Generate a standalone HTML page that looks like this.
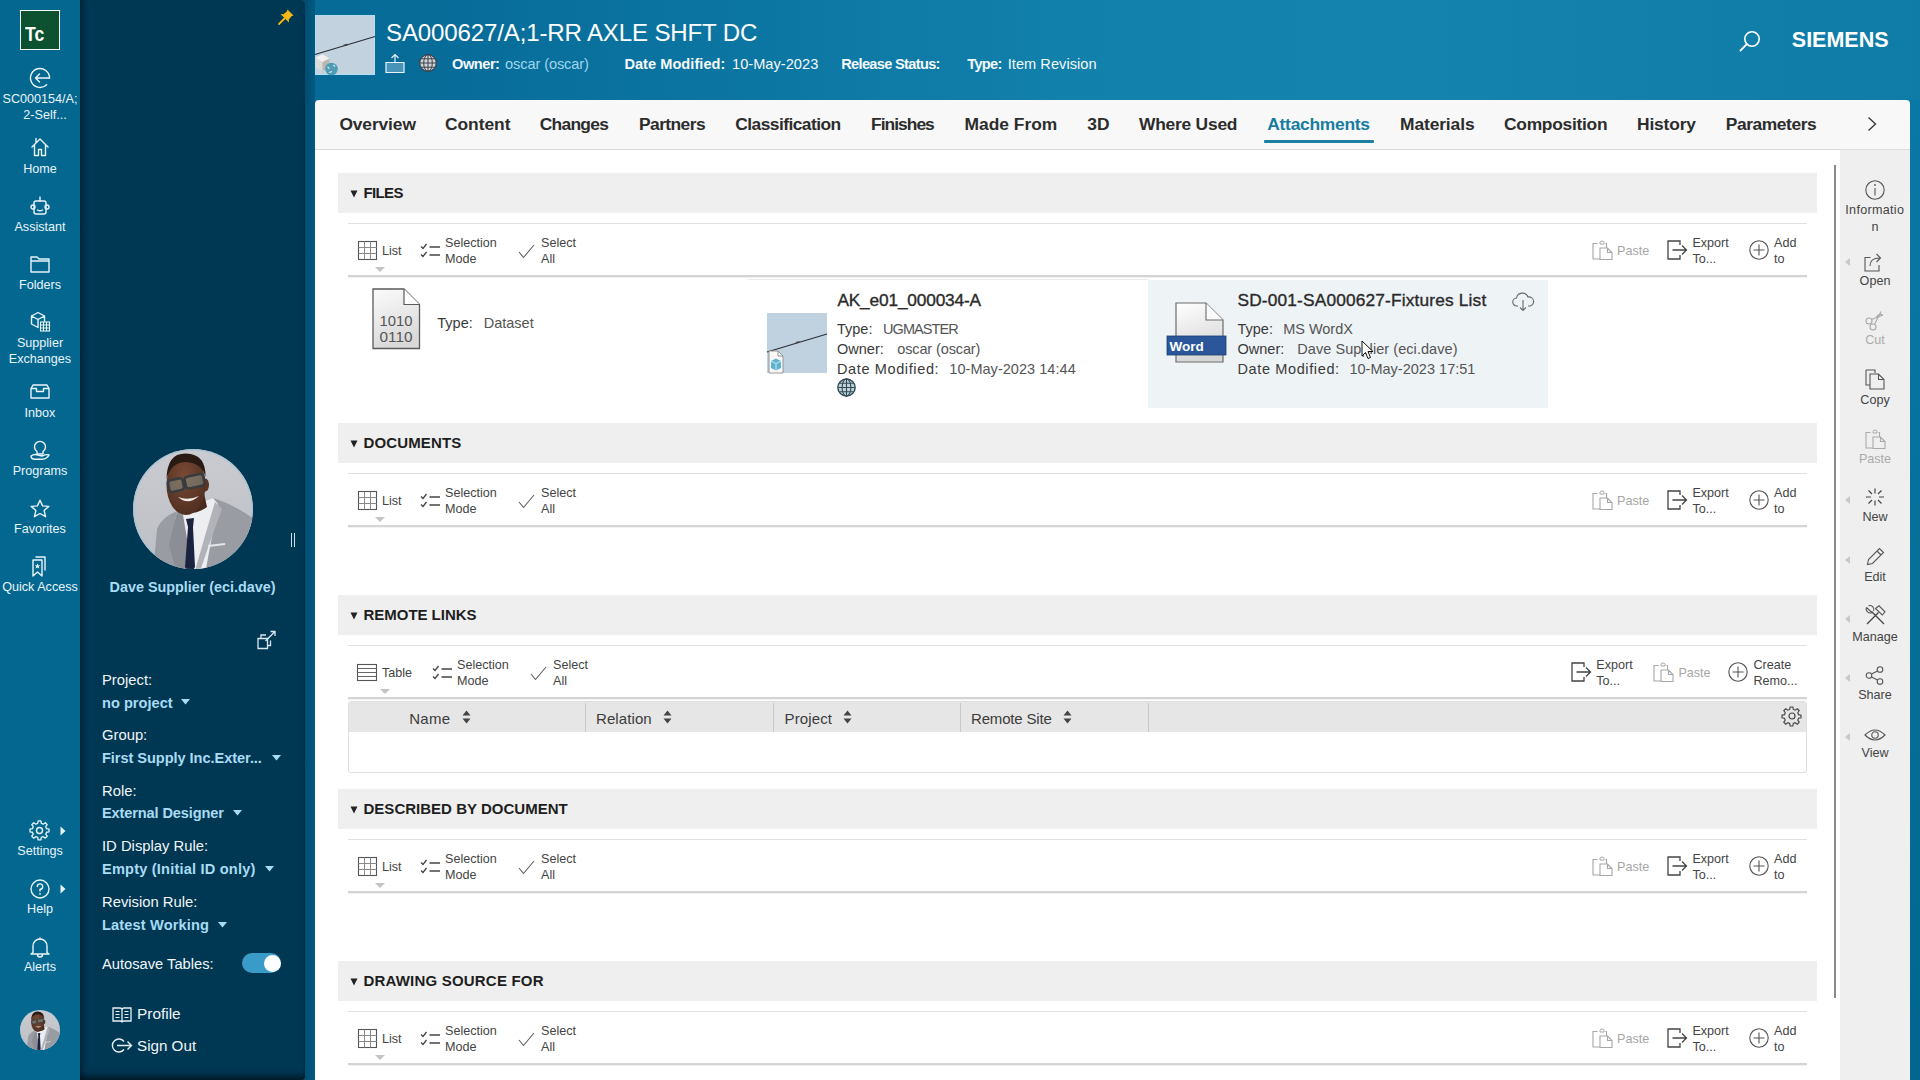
<!DOCTYPE html>
<html><head><meta charset="utf-8"><title>Teamcenter</title>
<style>
html,body{margin:0;padding:0;}
body{width:1920px;height:1080px;overflow:hidden;position:relative;background:#fff;font-family:"Liberation Sans",sans-serif;}
.t{position:absolute;white-space:nowrap;line-height:1;}
.r{position:absolute;}
svg.r{overflow:visible;}
</style></head><body>
<div class="r" style="left:0px;top:0px;width:1920px;height:1080px;background:linear-gradient(90deg,#04658f 0%,#086d9a 25%,#1180ab 55%,#1483ad 72%,#0f7ca8 100%);"></div>
<div class="r" style="left:1910px;top:100px;width:10px;height:980px;background:linear-gradient(180deg,#0a78a5,#02668f);"></div>
<div class="r" style="left:298px;top:0px;width:17px;height:1080px;background:linear-gradient(90deg,#024d72 40%,#03597f);"></div>
<div class="r" style="left:0px;top:0px;width:80px;height:1080px;background:#04678f;"></div>
<div class="r" style="left:80px;top:0px;width:225px;height:1080px;background:#003753;box-shadow:inset 7px 0 6px -5px rgba(0,0,0,0.4), inset 0 -7px 6px -3px rgba(0,0,0,0.55);border-radius:0 5px 4px 0;"></div>
<div class="r" style="left:315px;top:100px;width:1595px;height:50px;background:#f8f8f8;border-radius:4px 4px 0 0;border-bottom:1px solid #dcdcdc;box-sizing:border-box;"></div>
<div class="r" style="left:315px;top:150px;width:1525px;height:930px;background:#fff;"></div>
<div class="r" style="left:1840px;top:150px;width:70px;height:930px;background:#efefef;"></div>
<div class="r" style="left:20px;top:10px;width:40px;height:40px;background:#0c5230;border:1.5px solid #f4f8f6;box-sizing:border-box;"></div>
<div class="t" style="left:25.0px;top:23.9px;font-size:20.5px;font-weight:bold;color:#ffffff;transform:scaleX(0.86);transform-origin:0 0;">Tc</div>
<svg class="r" style="left:30px;top:68px;" width="20" height="20" viewBox="0 0 20 20" fill="none"><path d="M19.5 10 A9.5 9.5 0 1 0 16.7 16.7" stroke="#e8f5fb" stroke-width="1.4" stroke-linecap="round" stroke-linejoin="round"/><path d="M5.5 10 H19.5 M9.5 6 L5.5 10 L9.5 14" stroke="#e8f5fb" stroke-width="1.4" stroke-linecap="round" stroke-linejoin="round"/></svg>
<div class="t" style="left:-260.0px;width:600px;text-align:center;top:92.8px;font-size:12.6px;font-weight:normal;color:#e8f5fb;">SC000154/A;</div>
<div class="t" style="left:-255.0px;width:600px;text-align:center;top:108.8px;font-size:12.6px;font-weight:normal;color:#e8f5fb;">2-Self...</div>
<svg class="r" style="left:30px;top:137px;" width="20" height="20" viewBox="0 0 20 20" fill="none"><path d="M2 10 L10 2 L18 10 M4.5 8 V18.5 H8.5 V12.5 H11.5 V18.5 H15.5 V8 M6 5.5 V1.5" stroke="#e8f5fb" stroke-width="1.4" stroke-linecap="round" stroke-linejoin="round"/></svg>
<div class="t" style="left:-260.0px;width:600px;text-align:center;top:162.6px;font-size:12.6px;font-weight:normal;color:#e8f5fb;">Home</div>
<svg class="r" style="left:30px;top:196px;" width="20" height="20" viewBox="0 0 20 20" fill="none"><rect x="4" y="5" width="12" height="13" rx="2" stroke="#e8f5fb" stroke-width="1.4" stroke-linecap="round" stroke-linejoin="round"/><circle cx="3" cy="11" r="2" stroke="#e8f5fb" stroke-width="1.4" stroke-linecap="round" stroke-linejoin="round"/><circle cx="17" cy="11" r="2" stroke="#e8f5fb" stroke-width="1.4" stroke-linecap="round" stroke-linejoin="round"/><path d="M10 5 V1 M7.5 14 Q10 15.5 12.5 14" stroke="#e8f5fb" stroke-width="1.4" stroke-linecap="round" stroke-linejoin="round"/></svg>
<div class="t" style="left:-260.0px;width:600px;text-align:center;top:220.8px;font-size:12.6px;font-weight:normal;color:#e8f5fb;">Assistant</div>
<svg class="r" style="left:30px;top:255px;" width="20" height="18" viewBox="0 0 20 18" fill="none"><path d="M1 2 H7 L9 4 H19 V17 H1 Z M1 6 H19" stroke="#e8f5fb" stroke-width="1.4" stroke-linecap="round" stroke-linejoin="round"/></svg>
<div class="t" style="left:-260.0px;width:600px;text-align:center;top:278.6px;font-size:12.6px;font-weight:normal;color:#e8f5fb;">Folders</div>
<svg class="r" style="left:30px;top:311px;" width="21" height="21" viewBox="0 0 21 21" fill="none"><path d="M1.5 5 L8 1.5 L14.5 5 V10 M1.5 5 V13 L8 16.5 M1.5 5 L8 8.5 L14.5 5 M8 8.5 V16.5" stroke="#e8f5fb" stroke-width="1.4" stroke-linecap="round" stroke-linejoin="round"/><rect x="10.5" y="11" width="9" height="9" stroke="#e8f5fb" stroke-width="1.1"/><path d="M10.5 14 H19.5 M10.5 17 H19.5 M13.5 11 V20 M16.5 11 V20" stroke="#e8f5fb" stroke-width="1"/></svg>
<div class="t" style="left:-260.0px;width:600px;text-align:center;top:336.5px;font-size:12.6px;font-weight:normal;color:#e8f5fb;">Supplier</div>
<div class="t" style="left:-260.0px;width:600px;text-align:center;top:352.6px;font-size:12.6px;font-weight:normal;color:#e8f5fb;">Exchanges</div>
<svg class="r" style="left:30px;top:384px;" width="20" height="15" viewBox="0 0 20 15" fill="none"><path d="M3 1 H17 L19 4.5 V14 H1 V4.5 Z M1 4.5 H6.5 V7.5 H13.5 V4.5 H19" stroke="#e8f5fb" stroke-width="1.4" stroke-linecap="round" stroke-linejoin="round"/></svg>
<div class="t" style="left:-260.0px;width:600px;text-align:center;top:406.5px;font-size:12.6px;font-weight:normal;color:#e8f5fb;">Inbox</div>
<svg class="r" style="left:30px;top:440px;" width="20" height="20" viewBox="0 0 20 20" fill="none"><path d="M7 11.5 A5.5 5.5 0 1 1 13 11.5 V14 H7 Z" stroke="#e8f5fb" stroke-width="1.4" stroke-linecap="round" stroke-linejoin="round"/><path d="M1 16 Q4 13.5 8 15 L12 16 Q17 14 19 15 Q17 19 12 19.3 H4 Q1 19 1 16 Z" stroke="#e8f5fb" stroke-width="1.4" stroke-linecap="round" stroke-linejoin="round"/></svg>
<div class="t" style="left:-260.0px;width:600px;text-align:center;top:464.8px;font-size:12.6px;font-weight:normal;color:#e8f5fb;">Programs</div>
<svg class="r" style="left:30px;top:498.5px;" width="20" height="19" viewBox="0 0 20 19" fill="none"><path d="M10 1.2 L12.6 6.9 L18.8 7.4 L14.1 11.5 L15.6 17.7 L10 14.5 L4.4 17.7 L5.9 11.5 L1.2 7.4 L7.4 6.9 Z" stroke="#e8f5fb" stroke-width="1.4" stroke-linecap="round" stroke-linejoin="round"/></svg>
<div class="t" style="left:-260.0px;width:600px;text-align:center;top:522.6px;font-size:12.6px;font-weight:normal;color:#e8f5fb;">Favorites</div>
<svg class="r" style="left:32px;top:556px;" width="16" height="21" viewBox="0 0 16 21" fill="none"><path d="M4 1 H13 V14 M1 4 H10 V20 L5.5 16 L1 20 Z" stroke="#e8f5fb" stroke-width="1.4" stroke-linecap="round" stroke-linejoin="round"/><path d="M5.5 7.5 L6.3 9.3 L8.2 9.4 L6.8 10.6 L7.3 12.5 L5.5 11.4 L3.7 12.5 L4.2 10.6 L2.8 9.4 L4.7 9.3 Z" fill="#e8f5fb"/></svg>
<div class="t" style="left:-260.0px;width:600px;text-align:center;top:580.8px;font-size:12.6px;font-weight:normal;color:#e8f5fb;">Quick Access</div>
<svg class="r" style="left:30px;top:820px;" width="20" height="20" viewBox="0 0 20 20" fill="none"><path d="M8.6 1 H11.4 L11.9 3.6 L13.9 4.4 L16.1 2.9 L18.1 4.9 L16.6 7.1 L17.4 9.1 L20 9.6 V12.4 L17.4 12.9 L16.6 14.9 L18.1 17.1 L16.1 19.1 L13.9 17.6 L11.9 18.4 L11.4 21 H8.6 L8.1 18.4 L6.1 17.6 L3.9 19.1 L1.9 17.1 L3.4 14.9 L2.6 12.9 L0 12.4 V9.6 L2.6 9.1 L3.4 7.1 L1.9 4.9 L3.9 2.9 L6.1 4.4 L8.1 3.6 Z" stroke="#e8f5fb" stroke-width="1.4" stroke-linecap="round" stroke-linejoin="round" transform="scale(0.95)"/><circle cx="9.5" cy="10.5" r="3" stroke="#e8f5fb" stroke-width="1.4" stroke-linecap="round" stroke-linejoin="round"/></svg>
<svg class="r" style="left:60px;top:826px;" width="6" height="10" viewBox="0 0 6 10" fill="none"><path d="M0.5 0.5 L5.5 5 L0.5 9.5 Z" fill="#e8f5fb"/></svg>
<div class="t" style="left:-260.0px;width:600px;text-align:center;top:844.8px;font-size:12.6px;font-weight:normal;color:#e8f5fb;">Settings</div>
<svg class="r" style="left:30px;top:879px;" width="20" height="20" viewBox="0 0 20 20" fill="none"><circle cx="10" cy="10" r="9" stroke="#e8f5fb" stroke-width="1.4" stroke-linecap="round" stroke-linejoin="round"/><path d="M7.3 7.5 A2.7 2.7 0 1 1 10 10.3 V12" stroke="#e8f5fb" stroke-width="1.4" stroke-linecap="round" stroke-linejoin="round"/><circle cx="10" cy="14.8" r="0.9" fill="#e8f5fb"/></svg>
<svg class="r" style="left:60px;top:884px;" width="6" height="10" viewBox="0 0 6 10" fill="none"><path d="M0.5 0.5 L5.5 5 L0.5 9.5 Z" fill="#e8f5fb"/></svg>
<div class="t" style="left:-260.0px;width:600px;text-align:center;top:902.8px;font-size:12.6px;font-weight:normal;color:#e8f5fb;">Help</div>
<svg class="r" style="left:30px;top:937px;" width="20" height="20" viewBox="0 0 20 20" fill="none"><path d="M10 1 V2.5 M3 15.5 V9 A7 7 0 0 1 17 9 V15.5 L19 17 H1 Z M7.5 17.5 A2.5 2.5 0 0 0 12.5 17.5" stroke="#e8f5fb" stroke-width="1.4" stroke-linecap="round" stroke-linejoin="round"/></svg>
<div class="t" style="left:-260.0px;width:600px;text-align:center;top:960.8px;font-size:12.6px;font-weight:normal;color:#e8f5fb;">Alerts</div>
<svg class="r" style="left:20px;top:1010px" width="40" height="40" viewBox="0 0 120 120">
<defs><clipPath id="av1"><circle cx="60" cy="60" r="60"/></clipPath>
<linearGradient id="av1bg" x1="0" y1="0" x2="0" y2="1"><stop offset="0" stop-color="#c9cbd0"/><stop offset="1" stop-color="#bdbfc6"/></linearGradient>
<radialGradient id="av1f" cx="0.45" cy="0.35" r="0.7"><stop offset="0" stop-color="#7a4a35"/><stop offset="1" stop-color="#4e2d20"/></radialGradient></defs>
<g clip-path="url(#av1)">
<rect width="120" height="120" fill="url(#av1bg)"/>
<circle cx="60" cy="60" r="59.3" fill="none" stroke="#a9c3d2" stroke-width="1.4"/>
<path d="M20 125 L24 80 Q30 66 48 61 L60 56 L80 49 Q100 55 121 70 L122 125 Z" fill="#9a9ca3"/>
<path d="M44 63 L58 57 L80 49 L85 55 L72 125 L56 125 L42 72 Z" fill="#eceef2"/>
<path d="M44 63 L50 66 L60 125 L44 125 L36 96 Z" fill="#8c8e95"/>
<path d="M82 53 L89 60 L83 76 L66 125 L61 125 L74 80 Z" fill="#b1b3b9"/>
<path d="M53 70 L61 69 L60 78 L62 118 L57 126 L52 118 L55 78 Z" fill="#1b2240"/>
<path d="M75 97 L92 95" stroke="#e4e6ea" stroke-width="2"/>
<path d="M46 52 Q54 72 74 58 L71 44 L49 46 Z" fill="#4a2a1e"/>
<ellipse cx="72.5" cy="36" rx="3.5" ry="6.5" fill="#5a3424"/>
<ellipse cx="53" cy="36" rx="19.5" ry="30" fill="url(#av1f)"/>
<path d="M33.5 30 Q34 4 53 4.5 Q73 5 72.5 28 Q69 14 53 13 Q38 13 33.5 30 Z" fill="#2a1a14"/>
<g transform="rotate(-12 53 33)"><rect x="35" y="28" width="15" height="12" rx="3" fill="#8aa39c" fill-opacity="0.45" stroke="#3a3b3f" stroke-width="2.6"/><rect x="52" y="28" width="19" height="12" rx="3" fill="#8aa39c" fill-opacity="0.45" stroke="#3a3b3f" stroke-width="2.6"/></g>
<path d="M45 48 Q55 57 66 47 Q55 52 45 48 Z" fill="#f1ebe5"/>
</g></svg>
<svg class="r" style="left:277px;top:8px;" width="18" height="18" viewBox="0 0 18 18" fill="none"><path d="M10.5 1.5 L16.5 7.5 L14.5 8.2 L11.8 11.5 L12 14.5 L3.5 6 L6.5 6.2 L9.8 3.5 Z" fill="#f5b816"/><path d="M7.5 10.5 L2 16" stroke="#f5b816" stroke-width="1.8" stroke-linecap="round"/></svg>
<svg class="r" style="left:133px;top:449px" width="120" height="120" viewBox="0 0 120 120">
<defs><clipPath id="av2"><circle cx="60" cy="60" r="60"/></clipPath>
<linearGradient id="av2bg" x1="0" y1="0" x2="0" y2="1"><stop offset="0" stop-color="#c9cbd0"/><stop offset="1" stop-color="#bdbfc6"/></linearGradient>
<radialGradient id="av2f" cx="0.45" cy="0.35" r="0.7"><stop offset="0" stop-color="#7a4a35"/><stop offset="1" stop-color="#4e2d20"/></radialGradient></defs>
<g clip-path="url(#av2)">
<rect width="120" height="120" fill="url(#av2bg)"/>
<circle cx="60" cy="60" r="59.3" fill="none" stroke="#a9c3d2" stroke-width="1.4"/>
<path d="M20 125 L24 80 Q30 66 48 61 L60 56 L80 49 Q100 55 121 70 L122 125 Z" fill="#9a9ca3"/>
<path d="M44 63 L58 57 L80 49 L85 55 L72 125 L56 125 L42 72 Z" fill="#eceef2"/>
<path d="M44 63 L50 66 L60 125 L44 125 L36 96 Z" fill="#8c8e95"/>
<path d="M82 53 L89 60 L83 76 L66 125 L61 125 L74 80 Z" fill="#b1b3b9"/>
<path d="M53 70 L61 69 L60 78 L62 118 L57 126 L52 118 L55 78 Z" fill="#1b2240"/>
<path d="M75 97 L92 95" stroke="#e4e6ea" stroke-width="2"/>
<path d="M46 52 Q54 72 74 58 L71 44 L49 46 Z" fill="#4a2a1e"/>
<ellipse cx="72.5" cy="36" rx="3.5" ry="6.5" fill="#5a3424"/>
<ellipse cx="53" cy="36" rx="19.5" ry="30" fill="url(#av2f)"/>
<path d="M33.5 30 Q34 4 53 4.5 Q73 5 72.5 28 Q69 14 53 13 Q38 13 33.5 30 Z" fill="#2a1a14"/>
<g transform="rotate(-12 53 33)"><rect x="35" y="28" width="15" height="12" rx="3" fill="#8aa39c" fill-opacity="0.45" stroke="#3a3b3f" stroke-width="2.6"/><rect x="52" y="28" width="19" height="12" rx="3" fill="#8aa39c" fill-opacity="0.45" stroke="#3a3b3f" stroke-width="2.6"/></g>
<path d="M45 48 Q55 57 66 47 Q55 52 45 48 Z" fill="#f1ebe5"/>
</g></svg>
<div class="t" style="left:109.6px;top:580.3px;font-size:14.4px;font-weight:bold;color:#a8dcf3;letter-spacing:-0.020px;">Dave Supplier (eci.dave)</div>
<div class="r" style="left:291px;top:533px;width:1px;height:14px;background:#d0e0e8;"></div>
<div class="r" style="left:294px;top:533px;width:1px;height:14px;background:#d0e0e8;"></div>
<svg class="r" style="left:256px;top:630px;" width="21" height="21" viewBox="0 0 21 21" fill="none"><path d="M2 8.5 H11.5 V18.5 H2 Z" stroke="#d9e8ef" stroke-width="1.3" fill="none"/><path d="M5 8.5 V5 H10 M14.5 10.5 V15.5 H11.5" stroke="#d9e8ef" stroke-width="1.3" fill="none"/><path d="M9.5 11 L19 1.5 M14.5 1.5 H19 V6" stroke="#d9e8ef" stroke-width="1.3" fill="none"/></svg>
<div class="t" style="left:102.0px;top:672.6px;font-size:14.8px;font-weight:normal;color:#f2f6f8;">Project:</div>
<div class="t" style="left:102.0px;top:695.5px;font-size:14.6px;font-weight:bold;color:#a8dcf3;letter-spacing:0.014px;">no project</div>
<svg class="r" style="left:181px;top:699.4px;" width="9" height="6" viewBox="0 0 9 6" fill="none"><path d="M0 0 H9 L4.5 5.5 Z" fill="#a8dcf3"/></svg>
<div class="t" style="left:102.0px;top:728.0px;font-size:14.8px;font-weight:normal;color:#f2f6f8;">Group:</div>
<div class="t" style="left:102.0px;top:750.9px;font-size:14.6px;font-weight:bold;color:#a8dcf3;letter-spacing:-0.061px;">First Supply Inc.Exter...</div>
<svg class="r" style="left:271.5px;top:754.8px;" width="9" height="6" viewBox="0 0 9 6" fill="none"><path d="M0 0 H9 L4.5 5.5 Z" fill="#a8dcf3"/></svg>
<div class="t" style="left:102.0px;top:784.3px;font-size:14.8px;font-weight:normal;color:#f2f6f8;">Role:</div>
<div class="t" style="left:102.0px;top:806.1px;font-size:14.6px;font-weight:bold;color:#a8dcf3;letter-spacing:-0.134px;">External Designer</div>
<svg class="r" style="left:232.5px;top:810px;" width="9" height="6" viewBox="0 0 9 6" fill="none"><path d="M0 0 H9 L4.5 5.5 Z" fill="#a8dcf3"/></svg>
<div class="t" style="left:102.0px;top:839.0px;font-size:14.8px;font-weight:normal;color:#f2f6f8;">ID Display Rule:</div>
<div class="t" style="left:102.0px;top:862.3px;font-size:14.6px;font-weight:bold;color:#a8dcf3;letter-spacing:0.188px;">Empty (Initial ID only)</div>
<svg class="r" style="left:265px;top:866.2px;" width="9" height="6" viewBox="0 0 9 6" fill="none"><path d="M0 0 H9 L4.5 5.5 Z" fill="#a8dcf3"/></svg>
<div class="t" style="left:102.0px;top:895.4px;font-size:14.8px;font-weight:normal;color:#f2f6f8;">Revision Rule:</div>
<div class="t" style="left:102.0px;top:917.7px;font-size:14.6px;font-weight:bold;color:#a8dcf3;letter-spacing:0.139px;">Latest Working</div>
<svg class="r" style="left:217.5px;top:921.6px;" width="9" height="6" viewBox="0 0 9 6" fill="none"><path d="M0 0 H9 L4.5 5.5 Z" fill="#a8dcf3"/></svg>
<div class="t" style="left:102.0px;top:956.5px;font-size:14.7px;font-weight:normal;color:#f2f6f8;">Autosave Tables:</div>
<div class="r" style="left:242px;top:953px;width:39px;height:20px;background:#3a9bc9;border-radius:10px;"></div>
<div class="r" style="left:264px;top:954.5px;width:17px;height:17px;background:#fff;border-radius:50%;"></div>
<svg class="r" style="left:112px;top:1006px;" width="20" height="17" viewBox="0 0 20 17" fill="none"><path d="M1 2 H8 Q10 2 10 4 Q10 2 12 2 H19 V15 H12 Q10 15 10 16.5 Q10 15 8 15 H1 Z M10 4 V16" stroke="#e6f1f6" stroke-width="1.3" fill="none"/><path d="M3.5 5.5 H7.5 M3.5 8.5 H7.5 M3.5 11.5 H7.5 M12.5 5.5 H16.5 M12.5 8.5 H16.5 M12.5 11.5 H16.5" stroke="#e6f1f6" stroke-width="1.2"/></svg>
<div class="t" style="left:137.0px;top:1006.3px;font-size:15.4px;font-weight:normal;color:#f2f6f8;">Profile</div>
<svg class="r" style="left:111px;top:1038px;" width="22" height="15" viewBox="0 0 22 15" fill="none"><path d="M13 3.5 A6.5 6.5 0 1 0 13 11.5" stroke="#e6f1f6" stroke-width="1.4" fill="none"/><path d="M6 7.5 H20.5 M16.5 3.5 L20.5 7.5 L16.5 11.5" stroke="#e6f1f6" stroke-width="1.4" fill="none"/></svg>
<div class="t" style="left:137.0px;top:1038.4px;font-size:15.2px;font-weight:normal;color:#f2f6f8;">Sign Out</div>
<svg class="r" style="left:315px;top:15px" width="60" height="60" viewBox="0 0 60 60">
<rect x="0.5" y="0.5" width="59" height="59" fill="#c3d2df" stroke="#b4def2" stroke-width="1"/>
<path d="M0 39.5 L60 21.5" stroke="#2b3138" stroke-width="1.3"/>
<rect x="28.5" y="29.2" width="4" height="1.6" fill="#3c4147" transform="rotate(-17 30.5 30)"/>
<path d="M0.5 42.5 L7.5 39.5 L14.5 43.5 L14.5 52.5 L7.5 56 L0.5 52.5 Z" fill="#dcdad8"/><path d="M0.5 42.5 L7.5 39.5 L14.5 43.5 L7.5 47 Z" fill="#f2f1f0"/><path d="M7.5 47 L14.5 43.5 L14.5 52.5 L7.5 56 Z" fill="#b9b6b3"/>
<circle cx="16.5" cy="54" r="6.3" fill="#4f9cb4"/><path d="M12.5 52 L14.5 53.5 M18.5 50 L20 51.5 M14 57.5 L17 56.5" stroke="#d9eef5" stroke-width="1.3"/>
</svg>
<div class="t" style="left:386.0px;top:21.4px;font-size:24.1px;font-weight:normal;color:#ffffff;letter-spacing:-0.165px;">SA000627/A;1-RR AXLE SHFT DC</div>
<svg class="r" style="left:385px;top:53px;" width="20" height="21" viewBox="0 0 20 21" fill="none"><path d="M1 9.5 H19 V19.5 H1 Z" fill="#4a93b8" stroke="#e6f2f8" stroke-width="1.2"/><path d="M10 1.5 V9 M6.5 5 L10 1.5 L13.5 5" stroke="#e6f2f8" stroke-width="1.2" fill="none"/></svg>
<svg class="r" style="left:418.5px;top:53.5px;" width="18" height="18" viewBox="0 0 18 18" fill="none"><circle cx="9" cy="9" r="8.3" fill="#cdd6da" stroke="#3d3f45" stroke-width="1.2"/><path d="M1 9 H17 M2.5 4.8 H15.5 M2.5 13.2 H15.5 M9 1 V17" stroke="#3d3f45" stroke-width="1" fill="none"/><ellipse cx="9" cy="9" rx="4.3" ry="8.3" stroke="#3d3f45" stroke-width="1" fill="none"/></svg>
<div class="t" style="left:452.0px;top:57.4px;font-size:14.6px;font-weight:bold;color:#f4f8fa;letter-spacing:-0.459px;">Owner:</div>
<div class="t" style="left:505.0px;top:57.4px;font-size:14.6px;font-weight:normal;color:#9fd6ef;letter-spacing:-0.099px;">oscar (oscar)</div>
<div class="t" style="left:624.4px;top:57.4px;font-size:14.6px;font-weight:bold;color:#f4f8fa;letter-spacing:0.032px;">Date Modified:</div>
<div class="t" style="left:732.0px;top:57.4px;font-size:14.6px;font-weight:normal;color:#f4f8fa;letter-spacing:0.028px;">10-May-2023</div>
<div class="t" style="left:841.2px;top:57.4px;font-size:14.6px;font-weight:bold;color:#f4f8fa;letter-spacing:-0.674px;">Release Status:</div>
<div class="t" style="left:967.3px;top:57.4px;font-size:14.6px;font-weight:bold;color:#f4f8fa;letter-spacing:-0.714px;">Type:</div>
<div class="t" style="left:1007.7px;top:57.4px;font-size:14.6px;font-weight:normal;color:#f4f8fa;letter-spacing:0.046px;">Item Revision</div>
<svg class="r" style="left:1739px;top:30px;" width="22" height="22" viewBox="0 0 22 22" fill="none"><circle cx="13" cy="9" r="7.2" stroke="#ffffff" stroke-width="1.6" fill="none"/><path d="M7.8 14.2 L1.5 20.5" stroke="#ffffff" stroke-width="1.8" stroke-linecap="round"/></svg>
<div class="t" style="left:1791.8px;top:29.9px;font-size:21.5px;font-weight:bold;color:#ffffff;letter-spacing:0px;">SIEMENS</div>
<div class="t" style="left:339.4px;top:115.8px;font-size:17.4px;font-weight:bold;color:#2c2c2c;letter-spacing:-0.116px;">Overview</div>
<div class="t" style="left:445.0px;top:115.8px;font-size:17.4px;font-weight:bold;color:#2c2c2c;letter-spacing:-0.037px;">Content</div>
<div class="t" style="left:539.7px;top:115.8px;font-size:17.4px;font-weight:bold;color:#2c2c2c;letter-spacing:-0.713px;">Changes</div>
<div class="t" style="left:639.0px;top:115.8px;font-size:17.4px;font-weight:bold;color:#2c2c2c;letter-spacing:-0.573px;">Partners</div>
<div class="t" style="left:735.3px;top:115.8px;font-size:17.4px;font-weight:bold;color:#2c2c2c;letter-spacing:-0.557px;">Classification</div>
<div class="t" style="left:871.0px;top:115.8px;font-size:17.4px;font-weight:bold;color:#2c2c2c;letter-spacing:-0.970px;">Finishes</div>
<div class="t" style="left:964.6px;top:115.8px;font-size:17.4px;font-weight:bold;color:#2c2c2c;letter-spacing:-0.014px;">Made From</div>
<div class="t" style="left:1087.3px;top:115.8px;font-size:17.4px;font-weight:bold;color:#2c2c2c;letter-spacing:-0.037px;">3D</div>
<div class="t" style="left:1139.0px;top:115.8px;font-size:17.4px;font-weight:bold;color:#2c2c2c;letter-spacing:-0.228px;">Where Used</div>
<div class="t" style="left:1267.3px;top:115.8px;font-size:17.4px;font-weight:bold;color:#177da0;letter-spacing:-0.269px;">Attachments</div>
<div class="t" style="left:1400.0px;top:115.8px;font-size:17.4px;font-weight:bold;color:#2c2c2c;letter-spacing:-0.104px;">Materials</div>
<div class="t" style="left:1504.0px;top:115.8px;font-size:17.4px;font-weight:bold;color:#2c2c2c;letter-spacing:-0.271px;">Composition</div>
<div class="t" style="left:1637.0px;top:115.8px;font-size:17.4px;font-weight:bold;color:#2c2c2c;letter-spacing:-0.157px;">History</div>
<div class="t" style="left:1725.8px;top:115.8px;font-size:17.4px;font-weight:bold;color:#2c2c2c;letter-spacing:-0.433px;">Parameters</div>
<div class="r" style="left:1264px;top:140px;width:110px;height:2.5px;background:#1b7fa1;border-radius:1px;"></div>
<svg class="r" style="left:1867px;top:116px;" width="10" height="16" viewBox="0 0 10 16" fill="none"><path d="M1.5 1.5 L8.5 8 L1.5 14.5" stroke="#3a3a3a" stroke-width="1.4" fill="none"/></svg>
<div class="r" style="left:338px;top:173px;width:1479px;height:40px;background:#efefef;"></div>
<svg class="r" style="left:350px;top:190px;" width="8" height="8" viewBox="0 0 8 8" fill="none"><path d="M0.5 0.5 H7.5 L4 7.5 Z" fill="#222"/></svg>
<div class="t" style="left:363.5px;top:185.1px;font-size:15px;font-weight:bold;color:#1e1e1e;letter-spacing:-0.627px;">FILES</div>
<div class="r" style="left:348px;top:223px;width:1459px;height:1px;background:#e1e1e1;"></div>
<div class="r" style="left:348px;top:275px;width:1459px;height:2px;background:#d4d4d4;box-shadow:0 1px 1px rgba(0,0,0,0.06);"></div>
<svg class="r" style="left:357.5px;top:240.5px;" width="19" height="19" viewBox="0 0 19 19" fill="none"><rect x="0.5" y="0.5" width="18" height="18" stroke="#555" stroke-width="1.1" fill="none"/><path d="M6.5 0.5 V18.5 M12.5 0.5 V18.5 M0.5 6.5 H18.5 M0.5 12.5 H18.5" stroke="#8a8a8a" stroke-width="1"/></svg>
<div class="t" style="left:382.0px;top:244.8px;font-size:12.6px;font-weight:normal;color:#444444;">List</div>
<svg class="r" style="left:375px;top:267px;" width="10" height="5" viewBox="0 0 10 5" fill="none"><path d="M0 0 H10 L5 5 Z" fill="#c4c4c4"/></svg>
<svg class="r" style="left:420px;top:243px;" width="21" height="17" viewBox="0 0 21 17" fill="none"><path d="M1 3.5 L3 5.5 L6.5 1 M1 11.5 L3 13.5 L6.5 9" stroke="#444" stroke-width="1.3" fill="none"/><path d="M9.5 4 H20 M9.5 12 H20" stroke="#444" stroke-width="1.3"/></svg>
<div class="t" style="left:445.0px;top:236.8px;font-size:12.6px;font-weight:normal;color:#444444;">Selection</div>
<div class="t" style="left:445.0px;top:252.8px;font-size:12.6px;font-weight:normal;color:#444444;">Mode</div>
<svg class="r" style="left:518px;top:244px;" width="17" height="15" viewBox="0 0 17 15" fill="none"><path d="M1 8 L5.5 13.5 L16 1" stroke="#5a5a5a" stroke-width="1.05" fill="none"/></svg>
<div class="t" style="left:541.0px;top:236.8px;font-size:12.6px;font-weight:normal;color:#444444;">Select</div>
<div class="t" style="left:541.0px;top:252.8px;font-size:12.6px;font-weight:normal;color:#444444;">All</div>
<svg class="r" style="left:1591.5px;top:240px;" width="21" height="20" viewBox="0 0 21 20" fill="none"><path d="M8 4 H12 V2.5 Q12 1 10 1 Q8 1 8 2.5 Z" stroke="#a6a6a6" stroke-width="1" fill="none"/><path d="M13.5 3.5 H14.5 V8 M5.5 3.5 H1 V19 H8" stroke="#a6a6a6" stroke-width="1.1" fill="none"/><path d="M8 8 H15.5 L20 12.5 V19.5 H8 Z M15.5 8 V12.5 H20" stroke="#a6a6a6" stroke-width="1.1" fill="none"/></svg>
<div class="t" style="left:1617.0px;top:245.3px;font-size:12.6px;font-weight:normal;color:#a6a6a6;">Paste</div>
<svg class="r" style="left:1666.5px;top:240px;" width="21" height="20" viewBox="0 0 21 20" fill="none"><path d="M13 5 V1 H1 V19 H13 V15" stroke="#444" stroke-width="1.3" fill="none"/><path d="M5.5 10 H19.5 M15 5.5 L19.5 10 L15 14.5" stroke="#444" stroke-width="1.3" fill="none"/></svg>
<div class="t" style="left:1692.4px;top:236.8px;font-size:12.6px;font-weight:normal;color:#444444;">Export</div>
<div class="t" style="left:1692.4px;top:252.8px;font-size:12.6px;font-weight:normal;color:#444444;">To...</div>
<svg class="r" style="left:1748.5px;top:240px;" width="20" height="20" viewBox="0 0 20 20" fill="none"><circle cx="10" cy="10" r="9.2" stroke="#555" stroke-width="1.1" fill="none"/><path d="M10 4.5 V15.5 M4.5 10 H15.5" stroke="#555" stroke-width="1.1"/></svg>
<div class="t" style="left:1774.0px;top:236.8px;font-size:12.6px;font-weight:normal;color:#444444;">Add</div>
<div class="t" style="left:1774.0px;top:252.8px;font-size:12.6px;font-weight:normal;color:#444444;">to</div>
<svg class="r" style="left:372px;top:288px" width="49" height="62" viewBox="0 0 49 62">
<defs><linearGradient id="dg" x1="0" y1="0" x2="0.3" y2="1"><stop offset="0" stop-color="#fbfbfb"/><stop offset="1" stop-color="#d9d9d9"/></linearGradient></defs>
<path d="M1 1 H32 L47.5 16.5 V60.5 H1 Z" fill="url(#dg)" stroke="#5a5a5a" stroke-width="1.3"/>
<path d="M32 1 V16.5 H47.5" fill="#fff" stroke="#5a5a5a" stroke-width="1.2"/>
<text x="24" y="38" text-anchor="middle" font-family="Liberation Sans" font-size="15" fill="#555" textLength="33" lengthAdjust="spacingAndGlyphs">1010</text>
<text x="24" y="54" text-anchor="middle" font-family="Liberation Sans" font-size="15" fill="#555" textLength="33" lengthAdjust="spacingAndGlyphs">0110</text>
</svg>
<div class="t" style="left:437.3px;top:315.7px;font-size:14.5px;font-weight:normal;color:#3a3a3a;">Type:</div>
<div class="t" style="left:483.7px;top:315.7px;font-size:14.5px;font-weight:normal;color:#555555;letter-spacing:0.006px;">Dataset</div>
<div class="r" style="left:748px;top:279px;width:400px;height:1px;background:#ececec;"></div>
<svg class="r" style="left:767px;top:313px" width="60" height="61" viewBox="0 0 60 61">
<rect width="60" height="60" fill="#c0d1e0"/>
<path d="M0 39 L60 21" stroke="#2b3138" stroke-width="1.3"/>
<rect x="29" y="28.5" width="4" height="1.5" fill="#44494f" transform="rotate(-16 31 30)"/>
<path d="M2 38 H11 L16 43 V60 H2 Z" fill="#f7f7f7" stroke="#8d8d8d" stroke-width="0.9"/>
<path d="M11 38 V43 H16" fill="none" stroke="#8d8d8d" stroke-width="0.9"/>
<path d="M4 48 L9 45.5 L14 48 V55 L9 57.5 L4 55 Z" fill="#5eb2cf"/><path d="M4 48 L9 50.5 L14 48 M9 50.5 V57.5" stroke="#e6f5fa" stroke-width="0.8" fill="none"/>
</svg>
<div class="t" style="left:837.4px;top:292.4px;font-size:17.3px;font-weight:normal;color:#2a2a2a;-webkit-text-stroke:0.35px #2a2a2a;letter-spacing:-0.166px;">AK_e01_000034-A</div>
<div class="t" style="left:837.0px;top:322.4px;font-size:14.5px;font-weight:normal;color:#3a3a3a;">Type:</div>
<div class="t" style="left:883.0px;top:322.4px;font-size:14.5px;font-weight:normal;color:#555555;letter-spacing:-0.924px;">UGMASTER</div>
<div class="t" style="left:837.0px;top:342.4px;font-size:14.5px;font-weight:normal;color:#3a3a3a;">Owner:</div>
<div class="t" style="left:897.2px;top:342.4px;font-size:14.5px;font-weight:normal;color:#555555;letter-spacing:-0.117px;">oscar (oscar)</div>
<div class="t" style="left:837.0px;top:362.4px;font-size:14.5px;font-weight:normal;color:#3a3a3a;letter-spacing:0.623px;">Date Modified:</div>
<div class="t" style="left:949.3px;top:362.4px;font-size:14.5px;font-weight:normal;color:#555555;letter-spacing:0.041px;">10-May-2023 14:44</div>
<svg class="r" style="left:837px;top:378px;" width="19" height="19" viewBox="0 0 19 19" fill="none"><circle cx="9.5" cy="9.5" r="8.6" fill="#c3d3d9" stroke="#334b56" stroke-width="1.5"/><path d="M1.5 9.5 H17.5 M2.6 5.3 H16.4 M2.6 13.7 H16.4 M9.5 1 V18" stroke="#334b56" stroke-width="1.1" fill="none"/><ellipse cx="9.5" cy="9.5" rx="4.4" ry="8.6" stroke="#334b56" stroke-width="1.1" fill="none"/></svg>
<div class="r" style="left:1148px;top:279.5px;width:400px;height:128px;background:#eef3f6;"></div>
<svg class="r" style="left:1166px;top:302px" width="62" height="62" viewBox="0 0 62 62">
<defs><linearGradient id="wg" x1="0" y1="0" x2="0.3" y2="1"><stop offset="0" stop-color="#ffffff"/><stop offset="1" stop-color="#d6d6d6"/></linearGradient></defs>
<path d="M10 1 H40 L57 18 V60 H10 Z" fill="url(#wg)" stroke="#6b6b6b" stroke-width="1.2"/>
<path d="M40 1 V18 H57" fill="#fafafa" stroke="#6b6b6b" stroke-width="1.1"/>
<rect x="1" y="34" width="59" height="19" fill="#2b579a" stroke="#1d3f72" stroke-width="0.8"/>
<text x="3.5" y="48.5" font-family="Liberation Sans" font-size="13.5" font-weight="bold" fill="#fff">Word</text>
</svg>
<div class="t" style="left:1237.5px;top:292.4px;font-size:17.3px;font-weight:normal;color:#2a2a2a;-webkit-text-stroke:0.35px #2a2a2a;letter-spacing:0.170px;">SD-001-SA000627-Fixtures List</div>
<div class="t" style="left:1237.5px;top:322.4px;font-size:14.5px;font-weight:normal;color:#3a3a3a;">Type:</div>
<div class="t" style="left:1283.2px;top:322.4px;font-size:14.5px;font-weight:normal;color:#555555;letter-spacing:-0.019px;">MS WordX</div>
<div class="t" style="left:1237.5px;top:342.4px;font-size:14.5px;font-weight:normal;color:#3a3a3a;">Owner:</div>
<div class="t" style="left:1297.3px;top:342.4px;font-size:14.5px;font-weight:normal;color:#555555;letter-spacing:0.062px;">Dave Supplier (eci.dave)</div>
<div class="t" style="left:1237.5px;top:362.4px;font-size:14.5px;font-weight:normal;color:#3a3a3a;letter-spacing:0.623px;">Date Modified:</div>
<div class="t" style="left:1349.4px;top:362.4px;font-size:14.5px;font-weight:normal;color:#555555;letter-spacing:0.016px;">10-May-2023 17:51</div>
<svg class="r" style="left:1512px;top:292px;" width="23" height="20" viewBox="0 0 23 20" fill="none"><path d="M6 14 H5 A4 4 0 0 1 4.5 6 A6 6 0 0 1 16 5 A4.5 4.5 0 0 1 18 14 H16" stroke="#666" stroke-width="1.1" fill="none"/><path d="M11 8 V18.5 M8 15.5 L11 18.5 L14 15.5" stroke="#666" stroke-width="1.1" fill="none"/></svg>
<svg class="r" style="left:1361px;top:340px;" width="13" height="20" viewBox="0 0 13 20" fill="none"><path d="M1 1 V16 L4.5 12.5 L7 18.5 L9.5 17.5 L7 11.5 H12 Z" fill="#fff" stroke="#111" stroke-width="1"/></svg>
<div class="r" style="left:338px;top:423px;width:1479px;height:40px;background:#efefef;"></div>
<svg class="r" style="left:350px;top:440px;" width="8" height="8" viewBox="0 0 8 8" fill="none"><path d="M0.5 0.5 H7.5 L4 7.5 Z" fill="#222"/></svg>
<div class="t" style="left:363.5px;top:435.1px;font-size:15px;font-weight:bold;color:#1e1e1e;letter-spacing:0.130px;">DOCUMENTS</div>
<div class="r" style="left:348px;top:473px;width:1459px;height:1px;background:#e1e1e1;"></div>
<div class="r" style="left:348px;top:525px;width:1459px;height:2px;background:#d4d4d4;box-shadow:0 1px 1px rgba(0,0,0,0.06);"></div>
<svg class="r" style="left:357.5px;top:490.5px;" width="19" height="19" viewBox="0 0 19 19" fill="none"><rect x="0.5" y="0.5" width="18" height="18" stroke="#555" stroke-width="1.1" fill="none"/><path d="M6.5 0.5 V18.5 M12.5 0.5 V18.5 M0.5 6.5 H18.5 M0.5 12.5 H18.5" stroke="#8a8a8a" stroke-width="1"/></svg>
<div class="t" style="left:382.0px;top:494.8px;font-size:12.6px;font-weight:normal;color:#444444;">List</div>
<svg class="r" style="left:375px;top:517px;" width="10" height="5" viewBox="0 0 10 5" fill="none"><path d="M0 0 H10 L5 5 Z" fill="#c4c4c4"/></svg>
<svg class="r" style="left:420px;top:493px;" width="21" height="17" viewBox="0 0 21 17" fill="none"><path d="M1 3.5 L3 5.5 L6.5 1 M1 11.5 L3 13.5 L6.5 9" stroke="#444" stroke-width="1.3" fill="none"/><path d="M9.5 4 H20 M9.5 12 H20" stroke="#444" stroke-width="1.3"/></svg>
<div class="t" style="left:445.0px;top:486.8px;font-size:12.6px;font-weight:normal;color:#444444;">Selection</div>
<div class="t" style="left:445.0px;top:502.8px;font-size:12.6px;font-weight:normal;color:#444444;">Mode</div>
<svg class="r" style="left:518px;top:494px;" width="17" height="15" viewBox="0 0 17 15" fill="none"><path d="M1 8 L5.5 13.5 L16 1" stroke="#5a5a5a" stroke-width="1.05" fill="none"/></svg>
<div class="t" style="left:541.0px;top:486.8px;font-size:12.6px;font-weight:normal;color:#444444;">Select</div>
<div class="t" style="left:541.0px;top:502.8px;font-size:12.6px;font-weight:normal;color:#444444;">All</div>
<svg class="r" style="left:1591.5px;top:490px;" width="21" height="20" viewBox="0 0 21 20" fill="none"><path d="M8 4 H12 V2.5 Q12 1 10 1 Q8 1 8 2.5 Z" stroke="#a6a6a6" stroke-width="1" fill="none"/><path d="M13.5 3.5 H14.5 V8 M5.5 3.5 H1 V19 H8" stroke="#a6a6a6" stroke-width="1.1" fill="none"/><path d="M8 8 H15.5 L20 12.5 V19.5 H8 Z M15.5 8 V12.5 H20" stroke="#a6a6a6" stroke-width="1.1" fill="none"/></svg>
<div class="t" style="left:1617.0px;top:495.3px;font-size:12.6px;font-weight:normal;color:#a6a6a6;">Paste</div>
<svg class="r" style="left:1666.5px;top:490px;" width="21" height="20" viewBox="0 0 21 20" fill="none"><path d="M13 5 V1 H1 V19 H13 V15" stroke="#444" stroke-width="1.3" fill="none"/><path d="M5.5 10 H19.5 M15 5.5 L19.5 10 L15 14.5" stroke="#444" stroke-width="1.3" fill="none"/></svg>
<div class="t" style="left:1692.4px;top:486.8px;font-size:12.6px;font-weight:normal;color:#444444;">Export</div>
<div class="t" style="left:1692.4px;top:502.8px;font-size:12.6px;font-weight:normal;color:#444444;">To...</div>
<svg class="r" style="left:1748.5px;top:490px;" width="20" height="20" viewBox="0 0 20 20" fill="none"><circle cx="10" cy="10" r="9.2" stroke="#555" stroke-width="1.1" fill="none"/><path d="M10 4.5 V15.5 M4.5 10 H15.5" stroke="#555" stroke-width="1.1"/></svg>
<div class="t" style="left:1774.0px;top:486.8px;font-size:12.6px;font-weight:normal;color:#444444;">Add</div>
<div class="t" style="left:1774.0px;top:502.8px;font-size:12.6px;font-weight:normal;color:#444444;">to</div>
<div class="r" style="left:338px;top:595px;width:1479px;height:40px;background:#efefef;"></div>
<svg class="r" style="left:350px;top:612px;" width="8" height="8" viewBox="0 0 8 8" fill="none"><path d="M0.5 0.5 H7.5 L4 7.5 Z" fill="#222"/></svg>
<div class="t" style="left:363.5px;top:607.1px;font-size:15px;font-weight:bold;color:#1e1e1e;letter-spacing:-0.031px;">REMOTE LINKS</div>
<div class="r" style="left:348px;top:645px;width:1459px;height:1px;background:#e1e1e1;"></div>
<div class="r" style="left:348px;top:697px;width:1459px;height:2px;background:#d4d4d4;box-shadow:0 1px 1px rgba(0,0,0,0.06);"></div>
<svg class="r" style="left:357px;top:663.5px;" width="20" height="17" viewBox="0 0 20 17" fill="none"><rect x="0.5" y="0.5" width="19" height="16" stroke="#555" stroke-width="1.1" fill="none"/><path d="M0.5 4.5 H19.5 M0.5 8.5 H19.5 M0.5 12.5 H19.5" stroke="#666" stroke-width="1"/></svg>
<div class="t" style="left:382.0px;top:667.3px;font-size:12.6px;font-weight:normal;color:#444444;">Table</div>
<svg class="r" style="left:380px;top:689px;" width="10" height="5" viewBox="0 0 10 5" fill="none"><path d="M0 0 H10 L5 5 Z" fill="#c4c4c4"/></svg>
<svg class="r" style="left:432px;top:665px;" width="21" height="17" viewBox="0 0 21 17" fill="none"><path d="M1 3.5 L3 5.5 L6.5 1 M1 11.5 L3 13.5 L6.5 9" stroke="#444" stroke-width="1.3" fill="none"/><path d="M9.5 4 H20 M9.5 12 H20" stroke="#444" stroke-width="1.3"/></svg>
<div class="t" style="left:457.0px;top:658.8px;font-size:12.6px;font-weight:normal;color:#444444;">Selection</div>
<div class="t" style="left:457.0px;top:674.8px;font-size:12.6px;font-weight:normal;color:#444444;">Mode</div>
<svg class="r" style="left:530px;top:666px;" width="17" height="15" viewBox="0 0 17 15" fill="none"><path d="M1 8 L5.5 13.5 L16 1" stroke="#5a5a5a" stroke-width="1.05" fill="none"/></svg>
<div class="t" style="left:553.0px;top:658.8px;font-size:12.6px;font-weight:normal;color:#444444;">Select</div>
<div class="t" style="left:553.0px;top:674.8px;font-size:12.6px;font-weight:normal;color:#444444;">All</div>
<svg class="r" style="left:1570.5px;top:662px;" width="21" height="20" viewBox="0 0 21 20" fill="none"><path d="M13 5 V1 H1 V19 H13 V15" stroke="#444" stroke-width="1.3" fill="none"/><path d="M5.5 10 H19.5 M15 5.5 L19.5 10 L15 14.5" stroke="#444" stroke-width="1.3" fill="none"/></svg>
<div class="t" style="left:1596.3px;top:658.8px;font-size:12.6px;font-weight:normal;color:#444444;">Export</div>
<div class="t" style="left:1596.3px;top:674.8px;font-size:12.6px;font-weight:normal;color:#444444;">To...</div>
<svg class="r" style="left:1652.5px;top:662px;" width="21" height="20" viewBox="0 0 21 20" fill="none"><path d="M8 4 H12 V2.5 Q12 1 10 1 Q8 1 8 2.5 Z" stroke="#a6a6a6" stroke-width="1" fill="none"/><path d="M13.5 3.5 H14.5 V8 M5.5 3.5 H1 V19 H8" stroke="#a6a6a6" stroke-width="1.1" fill="none"/><path d="M8 8 H15.5 L20 12.5 V19.5 H8 Z M15.5 8 V12.5 H20" stroke="#a6a6a6" stroke-width="1.1" fill="none"/></svg>
<div class="t" style="left:1678.4px;top:667.3px;font-size:12.6px;font-weight:normal;color:#a6a6a6;">Paste</div>
<svg class="r" style="left:1727.5px;top:662px;" width="20" height="20" viewBox="0 0 20 20" fill="none"><circle cx="10" cy="10" r="9.2" stroke="#555" stroke-width="1.1" fill="none"/><path d="M10 4.5 V15.5 M4.5 10 H15.5" stroke="#555" stroke-width="1.1"/></svg>
<div class="t" style="left:1753.5px;top:658.8px;font-size:12.6px;font-weight:normal;color:#444444;">Create</div>
<div class="t" style="left:1753.5px;top:674.8px;font-size:12.6px;font-weight:normal;color:#444444;">Remo...</div>
<div class="r" style="left:348px;top:701px;width:1459px;height:72px;border:1px solid #dedede;border-radius:3px;box-sizing:border-box;background:#fff;"></div>
<div class="r" style="left:349px;top:702px;width:1457px;height:30px;background:#e6e6e6;border-radius:2px 2px 0 0;"></div>
<div class="r" style="left:585px;top:703px;width:1px;height:29px;background:#c9c9c9;"></div>
<div class="r" style="left:773px;top:703px;width:1px;height:29px;background:#c9c9c9;"></div>
<div class="r" style="left:960px;top:703px;width:1px;height:29px;background:#c9c9c9;"></div>
<div class="r" style="left:1148px;top:703px;width:1px;height:29px;background:#c9c9c9;"></div>
<div class="t" style="left:409.3px;top:710.8px;font-size:15px;font-weight:normal;color:#3c3c3c;letter-spacing:0.227px;">Name</div>
<svg class="r" style="left:461.5px;top:710px;" width="9" height="14" viewBox="0 0 9 14" fill="none"><path d="M0.5 5.5 L4.5 0.5 L8.5 5.5 Z M0.5 8.5 L4.5 13.5 L8.5 8.5 Z" fill="#444"/></svg>
<div class="t" style="left:596.0px;top:710.8px;font-size:15px;font-weight:normal;color:#3c3c3c;letter-spacing:0.095px;">Relation</div>
<svg class="r" style="left:663px;top:710px;" width="9" height="14" viewBox="0 0 9 14" fill="none"><path d="M0.5 5.5 L4.5 0.5 L8.5 5.5 Z M0.5 8.5 L4.5 13.5 L8.5 8.5 Z" fill="#444"/></svg>
<div class="t" style="left:784.5px;top:710.8px;font-size:15px;font-weight:normal;color:#3c3c3c;letter-spacing:0.137px;">Project</div>
<svg class="r" style="left:843.4px;top:710px;" width="9" height="14" viewBox="0 0 9 14" fill="none"><path d="M0.5 5.5 L4.5 0.5 L8.5 5.5 Z M0.5 8.5 L4.5 13.5 L8.5 8.5 Z" fill="#444"/></svg>
<div class="t" style="left:971.0px;top:710.8px;font-size:15px;font-weight:normal;color:#3c3c3c;letter-spacing:-0.173px;">Remote Site</div>
<svg class="r" style="left:1063px;top:710px;" width="9" height="14" viewBox="0 0 9 14" fill="none"><path d="M0.5 5.5 L4.5 0.5 L8.5 5.5 Z M0.5 8.5 L4.5 13.5 L8.5 8.5 Z" fill="#444"/></svg>
<svg class="r" style="left:1782px;top:706px;" width="21" height="21" viewBox="0 0 21 21" fill="none"><path d="M8.6 1 H11.4 L11.9 3.6 L13.9 4.4 L16.1 2.9 L18.1 4.9 L16.6 7.1 L17.4 9.1 L20 9.6 V12.4 L17.4 12.9 L16.6 14.9 L18.1 17.1 L16.1 19.1 L13.9 17.6 L11.9 18.4 L11.4 21 H8.6 L8.1 18.4 L6.1 17.6 L3.9 19.1 L1.9 17.1 L3.4 14.9 L2.6 12.9 L0 12.4 V9.6 L2.6 9.1 L3.4 7.1 L1.9 4.9 L3.9 2.9 L6.1 4.4 L8.1 3.6 Z" stroke="#444" stroke-width="1.2" fill="none" transform="scale(0.95)"/><circle cx="10" cy="10" r="3" stroke="#444" stroke-width="1.2" fill="none"/></svg>
<div class="r" style="left:338px;top:789px;width:1479px;height:40px;background:#efefef;"></div>
<svg class="r" style="left:350px;top:806px;" width="8" height="8" viewBox="0 0 8 8" fill="none"><path d="M0.5 0.5 H7.5 L4 7.5 Z" fill="#222"/></svg>
<div class="t" style="left:363.5px;top:801.1px;font-size:15px;font-weight:bold;color:#1e1e1e;letter-spacing:0.014px;">DESCRIBED BY DOCUMENT</div>
<div class="r" style="left:348px;top:839px;width:1459px;height:1px;background:#e1e1e1;"></div>
<div class="r" style="left:348px;top:891px;width:1459px;height:2px;background:#d4d4d4;box-shadow:0 1px 1px rgba(0,0,0,0.06);"></div>
<svg class="r" style="left:357.5px;top:856.5px;" width="19" height="19" viewBox="0 0 19 19" fill="none"><rect x="0.5" y="0.5" width="18" height="18" stroke="#555" stroke-width="1.1" fill="none"/><path d="M6.5 0.5 V18.5 M12.5 0.5 V18.5 M0.5 6.5 H18.5 M0.5 12.5 H18.5" stroke="#8a8a8a" stroke-width="1"/></svg>
<div class="t" style="left:382.0px;top:860.8px;font-size:12.6px;font-weight:normal;color:#444444;">List</div>
<svg class="r" style="left:375px;top:883px;" width="10" height="5" viewBox="0 0 10 5" fill="none"><path d="M0 0 H10 L5 5 Z" fill="#c4c4c4"/></svg>
<svg class="r" style="left:420px;top:859px;" width="21" height="17" viewBox="0 0 21 17" fill="none"><path d="M1 3.5 L3 5.5 L6.5 1 M1 11.5 L3 13.5 L6.5 9" stroke="#444" stroke-width="1.3" fill="none"/><path d="M9.5 4 H20 M9.5 12 H20" stroke="#444" stroke-width="1.3"/></svg>
<div class="t" style="left:445.0px;top:852.8px;font-size:12.6px;font-weight:normal;color:#444444;">Selection</div>
<div class="t" style="left:445.0px;top:868.8px;font-size:12.6px;font-weight:normal;color:#444444;">Mode</div>
<svg class="r" style="left:518px;top:860px;" width="17" height="15" viewBox="0 0 17 15" fill="none"><path d="M1 8 L5.5 13.5 L16 1" stroke="#5a5a5a" stroke-width="1.05" fill="none"/></svg>
<div class="t" style="left:541.0px;top:852.8px;font-size:12.6px;font-weight:normal;color:#444444;">Select</div>
<div class="t" style="left:541.0px;top:868.8px;font-size:12.6px;font-weight:normal;color:#444444;">All</div>
<svg class="r" style="left:1591.5px;top:856px;" width="21" height="20" viewBox="0 0 21 20" fill="none"><path d="M8 4 H12 V2.5 Q12 1 10 1 Q8 1 8 2.5 Z" stroke="#a6a6a6" stroke-width="1" fill="none"/><path d="M13.5 3.5 H14.5 V8 M5.5 3.5 H1 V19 H8" stroke="#a6a6a6" stroke-width="1.1" fill="none"/><path d="M8 8 H15.5 L20 12.5 V19.5 H8 Z M15.5 8 V12.5 H20" stroke="#a6a6a6" stroke-width="1.1" fill="none"/></svg>
<div class="t" style="left:1617.0px;top:861.3px;font-size:12.6px;font-weight:normal;color:#a6a6a6;">Paste</div>
<svg class="r" style="left:1666.5px;top:856px;" width="21" height="20" viewBox="0 0 21 20" fill="none"><path d="M13 5 V1 H1 V19 H13 V15" stroke="#444" stroke-width="1.3" fill="none"/><path d="M5.5 10 H19.5 M15 5.5 L19.5 10 L15 14.5" stroke="#444" stroke-width="1.3" fill="none"/></svg>
<div class="t" style="left:1692.4px;top:852.8px;font-size:12.6px;font-weight:normal;color:#444444;">Export</div>
<div class="t" style="left:1692.4px;top:868.8px;font-size:12.6px;font-weight:normal;color:#444444;">To...</div>
<svg class="r" style="left:1748.5px;top:856px;" width="20" height="20" viewBox="0 0 20 20" fill="none"><circle cx="10" cy="10" r="9.2" stroke="#555" stroke-width="1.1" fill="none"/><path d="M10 4.5 V15.5 M4.5 10 H15.5" stroke="#555" stroke-width="1.1"/></svg>
<div class="t" style="left:1774.0px;top:852.8px;font-size:12.6px;font-weight:normal;color:#444444;">Add</div>
<div class="t" style="left:1774.0px;top:868.8px;font-size:12.6px;font-weight:normal;color:#444444;">to</div>
<div class="r" style="left:338px;top:961px;width:1479px;height:40px;background:#efefef;"></div>
<svg class="r" style="left:350px;top:978px;" width="8" height="8" viewBox="0 0 8 8" fill="none"><path d="M0.5 0.5 H7.5 L4 7.5 Z" fill="#222"/></svg>
<div class="t" style="left:363.5px;top:973.1px;font-size:15px;font-weight:bold;color:#1e1e1e;letter-spacing:0.196px;">DRAWING SOURCE FOR</div>
<div class="r" style="left:348px;top:1011px;width:1459px;height:1px;background:#e1e1e1;"></div>
<div class="r" style="left:348px;top:1063px;width:1459px;height:2px;background:#d4d4d4;box-shadow:0 1px 1px rgba(0,0,0,0.06);"></div>
<svg class="r" style="left:357.5px;top:1028.5px;" width="19" height="19" viewBox="0 0 19 19" fill="none"><rect x="0.5" y="0.5" width="18" height="18" stroke="#555" stroke-width="1.1" fill="none"/><path d="M6.5 0.5 V18.5 M12.5 0.5 V18.5 M0.5 6.5 H18.5 M0.5 12.5 H18.5" stroke="#8a8a8a" stroke-width="1"/></svg>
<div class="t" style="left:382.0px;top:1032.8px;font-size:12.6px;font-weight:normal;color:#444444;">List</div>
<svg class="r" style="left:375px;top:1055px;" width="10" height="5" viewBox="0 0 10 5" fill="none"><path d="M0 0 H10 L5 5 Z" fill="#c4c4c4"/></svg>
<svg class="r" style="left:420px;top:1031px;" width="21" height="17" viewBox="0 0 21 17" fill="none"><path d="M1 3.5 L3 5.5 L6.5 1 M1 11.5 L3 13.5 L6.5 9" stroke="#444" stroke-width="1.3" fill="none"/><path d="M9.5 4 H20 M9.5 12 H20" stroke="#444" stroke-width="1.3"/></svg>
<div class="t" style="left:445.0px;top:1024.8px;font-size:12.6px;font-weight:normal;color:#444444;">Selection</div>
<div class="t" style="left:445.0px;top:1040.8px;font-size:12.6px;font-weight:normal;color:#444444;">Mode</div>
<svg class="r" style="left:518px;top:1032px;" width="17" height="15" viewBox="0 0 17 15" fill="none"><path d="M1 8 L5.5 13.5 L16 1" stroke="#5a5a5a" stroke-width="1.05" fill="none"/></svg>
<div class="t" style="left:541.0px;top:1024.8px;font-size:12.6px;font-weight:normal;color:#444444;">Select</div>
<div class="t" style="left:541.0px;top:1040.8px;font-size:12.6px;font-weight:normal;color:#444444;">All</div>
<svg class="r" style="left:1591.5px;top:1028px;" width="21" height="20" viewBox="0 0 21 20" fill="none"><path d="M8 4 H12 V2.5 Q12 1 10 1 Q8 1 8 2.5 Z" stroke="#a6a6a6" stroke-width="1" fill="none"/><path d="M13.5 3.5 H14.5 V8 M5.5 3.5 H1 V19 H8" stroke="#a6a6a6" stroke-width="1.1" fill="none"/><path d="M8 8 H15.5 L20 12.5 V19.5 H8 Z M15.5 8 V12.5 H20" stroke="#a6a6a6" stroke-width="1.1" fill="none"/></svg>
<div class="t" style="left:1617.0px;top:1033.3px;font-size:12.6px;font-weight:normal;color:#a6a6a6;">Paste</div>
<svg class="r" style="left:1666.5px;top:1028px;" width="21" height="20" viewBox="0 0 21 20" fill="none"><path d="M13 5 V1 H1 V19 H13 V15" stroke="#444" stroke-width="1.3" fill="none"/><path d="M5.5 10 H19.5 M15 5.5 L19.5 10 L15 14.5" stroke="#444" stroke-width="1.3" fill="none"/></svg>
<div class="t" style="left:1692.4px;top:1024.8px;font-size:12.6px;font-weight:normal;color:#444444;">Export</div>
<div class="t" style="left:1692.4px;top:1040.8px;font-size:12.6px;font-weight:normal;color:#444444;">To...</div>
<svg class="r" style="left:1748.5px;top:1028px;" width="20" height="20" viewBox="0 0 20 20" fill="none"><circle cx="10" cy="10" r="9.2" stroke="#555" stroke-width="1.1" fill="none"/><path d="M10 4.5 V15.5 M4.5 10 H15.5" stroke="#555" stroke-width="1.1"/></svg>
<div class="t" style="left:1774.0px;top:1024.8px;font-size:12.6px;font-weight:normal;color:#444444;">Add</div>
<div class="t" style="left:1774.0px;top:1040.8px;font-size:12.6px;font-weight:normal;color:#444444;">to</div>
<div class="r" style="left:1834px;top:165px;width:2px;height:833px;background:#8a8a8a;"></div>
<svg class="r" style="left:1865px;top:180px;" width="20" height="20" viewBox="0 0 20 20" fill="none"><circle cx="10" cy="10" r="9.2" stroke="#555" stroke-width="1.1" fill="none"/><path d="M10 8 V15.5" stroke="#555" stroke-width="1.1" fill="none"/><circle cx="10" cy="5" r="0.9" fill="#555"/></svg>
<div class="t" style="left:1845.3px;top:204.3px;font-size:12.6px;font-weight:normal;color:#444444;letter-spacing:0.298px;">Informatio</div>
<div class="t" style="left:1575.0px;width:600px;text-align:center;top:221.3px;font-size:12.6px;font-weight:normal;color:#444444;">n</div>
<svg class="r" style="left:1845px;top:258px;" width="5" height="8" viewBox="0 0 5 8" fill="none"><path d="M5 0 V8 L0 4 Z" fill="#c8c8c8"/></svg>
<svg class="r" style="left:1864px;top:252px;" width="21" height="20" viewBox="0 0 21 20" fill="none"><path d="M6.5 5.5 H1 V19 H15 V13" stroke="#555" stroke-width="1.1" fill="none"/><path d="M6 14 Q6 6 15.5 6 M12.5 2 L16.5 6 L12.5 10" stroke="#555" stroke-width="1.1" fill="none"/></svg>
<div class="t" style="left:1575.0px;width:600px;text-align:center;top:274.8px;font-size:12.6px;font-weight:normal;color:#444444;">Open</div>
<svg class="r" style="left:1865px;top:310px;" width="20" height="21" viewBox="0 0 20 21" fill="none"><circle cx="4" cy="11" r="3" stroke="#aaa" stroke-width="1.1" fill="none"/><circle cx="8" cy="17" r="3" stroke="#aaa" stroke-width="1.1" fill="none"/><path d="M6.5 9.5 L18 5 M9.5 14.5 L16 1.5 M11 7.5 Q14 3 18 5" stroke="#aaa" stroke-width="1.1" fill="none"/></svg>
<div class="t" style="left:1575.0px;width:600px;text-align:center;top:334.3px;font-size:12.6px;font-weight:normal;color:#aaaaaa;">Cut</div>
<svg class="r" style="left:1865px;top:369px;" width="21" height="21" viewBox="0 0 21 21" fill="none"><path d="M1 1 H10 L10 4 M1 1 V16 H5" stroke="#555" stroke-width="1.1" fill="none"/><path d="M5 5 H13.5 L19 10.5 V20 H5 Z M13.5 5 V10.5 H19" stroke="#555" stroke-width="1.1" fill="none"/></svg>
<div class="t" style="left:1575.0px;width:600px;text-align:center;top:394.3px;font-size:12.6px;font-weight:normal;color:#444444;">Copy</div>
<svg class="r" style="left:1865px;top:429px;" width="21" height="20" viewBox="0 0 21 20" fill="none"><path d="M8 4 H12 V2.5 Q12 1 10 1 Q8 1 8 2.5 Z" stroke="#aaa" stroke-width="1" fill="none"/><path d="M13.5 3.5 H14.5 V8 M5.5 3.5 H1 V19 H8" stroke="#aaa" stroke-width="1.1" fill="none"/><path d="M8 8 H15.5 L20 12.5 V19.5 H8 Z M15.5 8 V12.5 H20" stroke="#aaa" stroke-width="1.1" fill="none"/></svg>
<div class="t" style="left:1575.0px;width:600px;text-align:center;top:452.8px;font-size:12.6px;font-weight:normal;color:#aaaaaa;">Paste</div>
<svg class="r" style="left:1845px;top:496px;" width="5" height="8" viewBox="0 0 5 8" fill="none"><path d="M5 0 V8 L0 4 Z" fill="#c8c8c8"/></svg>
<svg class="r" style="left:1865px;top:488px;" width="20" height="18" viewBox="0 0 20 18" fill="none"><path d="M10 0.5 V5.5 M10 12.5 V17.5 M1 9 H6 M14 9 H19 M3.5 2.5 L7 6 M13 12 L16.5 15.5 M16.5 2.5 L13 6 M7 12 L3.5 15.5" stroke="#444" stroke-width="1.2"/></svg>
<div class="t" style="left:1575.0px;width:600px;text-align:center;top:511.3px;font-size:12.6px;font-weight:normal;color:#444444;">New</div>
<svg class="r" style="left:1845px;top:556px;" width="5" height="8" viewBox="0 0 5 8" fill="none"><path d="M5 0 V8 L0 4 Z" fill="#c8c8c8"/></svg>
<svg class="r" style="left:1866px;top:547px;" width="19" height="19" viewBox="0 0 19 19" fill="none"><path d="M1.5 17.5 L2.5 12.5 L13.5 1.5 L17.5 5.5 L6.5 16.5 Z M11 4 L15 8" stroke="#555" stroke-width="1.1" fill="none"/></svg>
<div class="t" style="left:1575.0px;width:600px;text-align:center;top:571.3px;font-size:12.6px;font-weight:normal;color:#444444;">Edit</div>
<svg class="r" style="left:1845px;top:615px;" width="5" height="8" viewBox="0 0 5 8" fill="none"><path d="M5 0 V8 L0 4 Z" fill="#c8c8c8"/></svg>
<svg class="r" style="left:1865px;top:605px;" width="21" height="21" viewBox="0 0 21 21" fill="none"><path d="M6.5 6.5 L19 19 M13.5 7.5 L2 19" stroke="#444" stroke-width="1.3" fill="none"/><path d="M10.5 3.5 L14 0.8 L20 6.8 L17.3 10 Z" stroke="#555" stroke-width="1.1" fill="none"/><path d="M1.5 2.5 A4 4 0 0 0 7 7.5 M1.5 2.5 L4.2 5 M7 7.5 L4.2 5 M3.5 0.8 A4 4 0 0 1 8.7 5.8" stroke="#555" stroke-width="1.1" fill="none"/></svg>
<div class="t" style="left:1575.0px;width:600px;text-align:center;top:631.3px;font-size:12.6px;font-weight:normal;color:#444444;">Manage</div>
<svg class="r" style="left:1845px;top:674px;" width="5" height="8" viewBox="0 0 5 8" fill="none"><path d="M5 0 V8 L0 4 Z" fill="#c8c8c8"/></svg>
<svg class="r" style="left:1865px;top:666px;" width="20" height="19" viewBox="0 0 20 19" fill="none"><circle cx="15" cy="3.5" r="2.8" stroke="#555" stroke-width="1.1" fill="none"/><circle cx="15" cy="15.5" r="2.8" stroke="#555" stroke-width="1.1" fill="none"/><circle cx="4" cy="9.5" r="2.8" stroke="#555" stroke-width="1.1" fill="none"/><path d="M6.5 8 L12.5 5 M6.5 11 L12.5 14" stroke="#555" stroke-width="1.1" fill="none"/></svg>
<div class="t" style="left:1575.0px;width:600px;text-align:center;top:689.3px;font-size:12.6px;font-weight:normal;color:#444444;">Share</div>
<svg class="r" style="left:1845px;top:733px;" width="5" height="8" viewBox="0 0 5 8" fill="none"><path d="M5 0 V8 L0 4 Z" fill="#c8c8c8"/></svg>
<svg class="r" style="left:1864px;top:728px;" width="22" height="14" viewBox="0 0 22 14" fill="none"><path d="M1 7 Q11 -3 21 7 Q11 17 1 7 Z" stroke="#555" stroke-width="1.1" fill="none"/><circle cx="11" cy="7" r="3.2" stroke="#555" stroke-width="1.1" fill="none"/></svg>
<div class="t" style="left:1575.0px;width:600px;text-align:center;top:747.3px;font-size:12.6px;font-weight:normal;color:#444444;">View</div>
</body></html>
